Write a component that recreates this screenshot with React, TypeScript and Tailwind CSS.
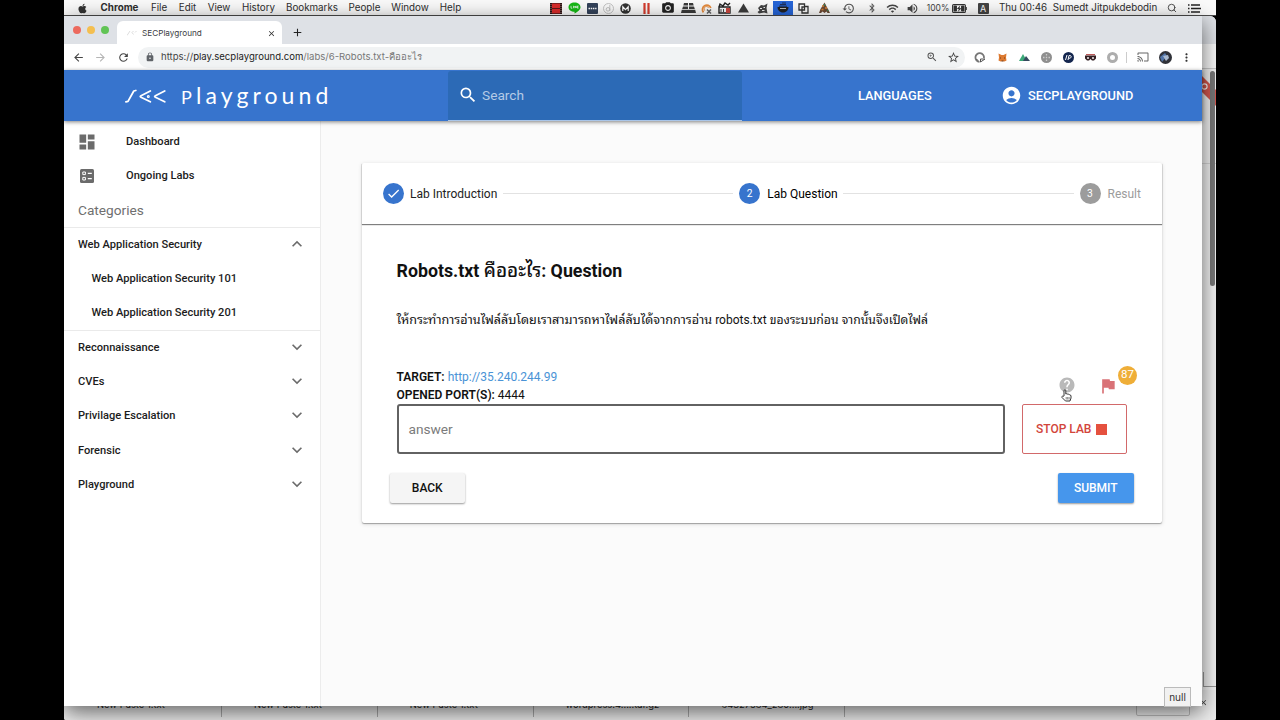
import type { ReactNode } from "react";
import { FaApple, FaBluetoothB } from "react-icons/fa";
import {
  MdArrowBack,
  MdArrowForward,
  MdRefresh,
  MdLock,
  MdZoomIn,
  MdStarBorder,
  MdCast,
  MdMoreVert,
  MdSearch,
  MdAccountCircle,
  MdDashboard,
  MdExpandMore,
  MdExpandLess,
  MdCheck,
  MdHelp,
  MdFlag,
  MdClose,
  MdAdd,
  MdHistory,
  MdWifi,
  MdVolumeUp,
  MdPhotoCamera,
} from "react-icons/md";
import { Search } from "lucide-react";

const MENUS = [
  { label: "File", width: "w-[28px]" },
  { label: "Edit", width: "w-[29px]" },
  { label: "View", width: "w-[34px]" },
  { label: "History", width: "w-[45px]" },
  { label: "Bookmarks", width: "w-[62px]" },
  { label: "People", width: "w-[43px]" },
  { label: "Window", width: "w-[48px]" },
  { label: "Help", width: "w-[33px]" },
];

const CATEGORIES = ["Reconnaissance", "CVEs", "Privilage Escalation", "Forensic", "Playground"];

const DOWNLOADS = [
  "New Paste 1.txt",
  "New Paste 1.txt",
  "New Paste 1.txt",
  "wordpress.4.....tar.gz",
  "64327584_280....jpg",
];

function Cell({ w, children }: { w: string; children: ReactNode }) {
  return <div className={"flex h-full shrink-0 items-center justify-center whitespace-nowrap " + w}>{children}</div>;
}

function StatusIcons() {
  return (
    <>
      <Cell w="w-[19px]">
        <svg width="12" height="11" viewBox="0 0 12 11">
          <rect width="12" height="11" fill="#2b1414" />
          <rect x="2" y="0.5" width="8" height="4.6" fill="#d92b2b" />
          <rect x="2" y="5.8" width="8" height="4.6" fill="#d92b2b" />
          <path d="M1 1v9M11 1v9" stroke="#b88" strokeWidth="0.8" strokeDasharray="1 1" />
        </svg>
      </Cell>
      <Cell w="w-[18px]">
        <svg width="13" height="12" viewBox="0 0 13 12">
          <path d="M6.5.5C9.800.500 12.500 2.500 12.500 5.200c0 2.400-3 4.800-6 6.300V9.800C3.200 9.800.500 7.900.500 5.200S3.200.500 6.500.500z" fill="#14b814" />
          <path d="M3 3.800v2.400h1.300M5.500 3.800v2.400M6.900 6.200V4l1.300 2V3.800M10.500 4H9.400v2.200h1.100M9.400 5.100h1" stroke="#fff" strokeWidth="0.700" fill="none" />
        </svg>
      </Cell>
      <Cell w="w-[18px]">
        <svg width="11" height="11" viewBox="0 0 11 11">
          <rect width="11" height="11" rx="1" fill="#33425a" />
          <path d="M1.5 5.5h8" stroke="#fff" strokeWidth="1.6" strokeDasharray="1.5 0.7" />
        </svg>
      </Cell>
      <Cell w="w-[15px]">
        <svg width="11" height="11" viewBox="0 0 11 11" fill="none" stroke="#b5b5b5" strokeWidth="0.8">
          <circle cx="5.5" cy="5.5" r="5" />
          <circle cx="5" cy="6.3" r="1.8" />
          <path d="M6.8 2v6" />
        </svg>
      </Cell>
      <Cell w="w-[19px]">
        <svg width="11" height="11" viewBox="0 0 11 11" fill="none">
          <circle cx="5.5" cy="5.5" r="5.3" fill="#333" />
          <path d="M2.8 8V3.8l2.7 2.8 2.7-2.8V8" stroke="#fff" strokeWidth="1.2" />
        </svg>
      </Cell>
      <Cell w="w-[23px]">
        <svg width="7" height="11" viewBox="0 0 7 11">
          <path d="M1.500 0v11M5.500 0v11" stroke="#d43c2e" strokeWidth="2.200" />
        </svg>
      </Cell>
      <Cell w="w-[20px]">
        <MdPhotoCamera size={14} color="#222" />
      </Cell>
      <Cell w="w-[20px]">
        <svg width="15" height="10" viewBox="0 0 15 10" fill="#3a3a3a">
          <path d="M3 0h4v2.6H2.3zM8 0h4l.7 2.6H8zM2 3.4h5V6H1.2zM8 3.4h5l.8 2.6H8zM.8 6.8h13.4L15 10H0z" />
        </svg>
      </Cell>
      <Cell w="w-[16px]">
        <svg width="11" height="11" viewBox="0 0 11 11" fill="none">
          <path d="M2.5 9.3A4.3 4.3 0 1 1 9.8 5" stroke="#e58a3c" strokeWidth="1.8" />
          <path d="M4 7.5a2.3 2.3 0 1 1 3.6-2.6" stroke="#e9a469" strokeWidth="1.2" />
          <path d="M6 6.500l4 4M10 6.500l-4 4" stroke="#666" strokeWidth="1.5" />
        </svg>
      </Cell>
      <Cell w="w-[20px]">
        <svg width="13" height="12" viewBox="0 0 13 12" fill="none">
          <path d="M1 5h11v6H1zM1 5l1-3 3 2 2-3 3 2 2-2" stroke="#222" strokeWidth="1.4" />
          <path d="M8 6h4v5H8z" fill="#c9473f" />
          <path d="M3 7v3M5.5 7v3" stroke="#444" />
        </svg>
      </Cell>
      <Cell w="w-[18px]">
        <svg width="11" height="10" viewBox="0 0 11 10" fill="#3c3c3c">
          <path d="M5.5 0.5 11 9.5H0z" />
        </svg>
      </Cell>
      <Cell w="w-[21px]">
        <svg width="11" height="11" viewBox="0 0 11 11">
          <path d="M10.5.5 9.5 5l1 5.5-3.5-1L2 10.5.5 9l2-1.5L1 5l3-3 3 .5z" fill="#444" />
          <path d="M3 5.500h2M6.500 4.500h1.500M5 7.500h2.500" stroke="#eee" />
        </svg>
      </Cell>
      <div className="-mt-px flex h-full w-[20px] shrink-0 items-center justify-center bg-[#2665d8]">
        <svg width="12" height="11" viewBox="0 0 12 11">
          <path d="M0.5 5h11c0 3-2.2 5.5-5.5 5.5S.5 8 .5 5z" fill="#222" />
          <path d="M2 4.2h8M3 2.6h6M5 1h4" stroke="#1d2c4e" strokeWidth="1" />
          <path d="M3 6.500h6" stroke="#bbb" strokeWidth="1" />
        </svg>
      </div>
      <Cell w="w-[21px]">
        <svg width="11" height="11" viewBox="0 0 11 11" fill="none" stroke="#333" strokeWidth="1.3">
          <path d="M1 1h5.500v3H4V7H1zM4 7v3h6V3.500H6.500V7H4" />
        </svg>
      </Cell>
      <Cell w="w-[20px]">
        <svg width="13" height="12" viewBox="0 0 13 12">
          <path d="M6.500 0.500 12 11H9.500L8.500 9.500 6.500 11 4.500 9.500 3 11H1l1.500-4z" fill="#6b4a35" />
          <path d="M4 4h2M7 6h2M3.500 7.500h2" stroke="#d98236" strokeWidth="1.5" />
          <path d="M6.500 2v2M9 8.500h1.500" stroke="#3f7b54" strokeWidth="1.4" />
        </svg>
      </Cell>
      <Cell w="w-[28px]">
        <MdHistory size={13} color="#555" />
      </Cell>
      <Cell w="w-[20px]">
        <FaBluetoothB size={10} color="#555" />
      </Cell>
      <Cell w="w-[20px]">
        <MdWifi size={13} color="#444" />
      </Cell>
      <Cell w="w-[20px]">
        <MdVolumeUp size={13} color="#444" />
      </Cell>
      <Cell w="w-[32px]">
        <span className="text-[8.5px] text-[#444]">100%</span>
      </Cell>
      <Cell w="w-[12px]">
        <svg className="shrink-0" width="16" height="9" viewBox="0 0 16 9">
          <rect x="0.600" y="0.600" width="12.800" height="7.800" rx="1" fill="none" stroke="#333" strokeWidth="1.1" />
          <path d="M2 2h2.500v5H2zM9.500 2H12v5H9.500zM14.400 3v3" fill="#333" stroke="#333" strokeWidth="0.9" />
          <path d="M8.200 1.500 4.800 5h2l-.8 2.700L9.500 4.200h-2z" fill="#333" />
        </svg>
      </Cell>
      <Cell w="w-[34px]">
        <span className="grid h-[11px] w-[11px] place-items-center rounded-[1px] bg-[#444] text-[9px] leading-none text-white">
          A
        </span>
      </Cell>
      <Cell w="w-[46px]">Thu 00:46</Cell>
      <Cell w="w-[118px]">Sumedt Jitpukdebodin</Cell>
      <Cell w="w-[16px]">
        <Search size={10} strokeWidth={2.2} color="#444" />
      </Cell>
      <Cell w="w-[28px]">
        <svg width="13" height="9" viewBox="0 0 13 9" stroke="#222" strokeWidth="1.3">
          <path d="M0 1h1.500M3 1h9M0 4.500h1.500M3 4.500h10M0 8h1.500M3 8h9" />
        </svg>
      </Cell>
    </>
  );
}

function MenuBar() {
  return (
    <div className="flex h-4 items-center border-b border-[#4a4a4a] bg-[#fafafa] pt-px pr-[8px] text-[9.8px] text-[#2e2e2e]">
      <Cell w="w-[37px]">
        <FaApple size={11} color="#333" />
      </Cell>
      <Cell w="w-[37px]">
        <span className="font-bold">Chrome</span>
      </Cell>
      <div className="w-[7px]" />
      {MENUS.map((m) => (
        <Cell key={m.label} w={m.width}>
          {m.label}
        </Cell>
      ))}
      <div className="flex-1" />
      <StatusIcons />
    </div>
  );
}

function TabStrip() {
  return (
    <div className="flex h-7 items-end bg-[#dee1e6] pl-[9px]">
      <div className="flex h-7 items-center gap-[5px]">
        <span className="h-2 w-2 rounded-full bg-[#ec6a5e]" />
        <span className="ml-px h-2 w-2 rounded-full bg-[#f4bf50]" />
        <span className="ml-px h-2 w-2 rounded-full bg-[#61c455]" />
      </div>
      <div className="ml-[8px] flex h-[23px] w-[165px] items-center rounded-t-md bg-white pt-px pr-[6px] pl-[10px]">
        <svg width="10" height="6" viewBox="0 0 10 6" fill="none" stroke="#ddd">
          <path d="M0 5.500 3 1M6.500 1 5 2.500l1.500 2M9.500 1 8 2.500" />
        </svg>
        <span className="ml-[5px] flex-1 text-[8.2px] text-[#3c4043]">SECPlayground</span>
        <MdClose size={9} color="#333" />
      </div>
      <MdAdd size={13} color="#222" className="mb-[5px] ml-[9px]" />
    </div>
  );
}

function Toolbar() {
  return (
    <div className="flex h-[26px] items-center bg-white pl-[8px]">
      <MdArrowBack size={13} color="#444" />
      <MdArrowForward size={13} color="#b5b5b5" className="ml-[9px]" />
      <MdRefresh size={13} color="#444" className="ml-[10px]" />
      <div className="ml-[8px] flex h-[21px] w-[827px] items-center rounded-full bg-[#f1f3f4] pr-[5px] pl-[7px]">
        <MdLock size={10} color="#5f6368" />
        <div className="ml-[6px] flex-1 text-[9.55px] text-[#777]">
          <span className="text-[#444]">https://</span>
          <span className="text-[#222]">play.secplayground.com</span>
          /labs/6-Robots.txt-คืออะไร
        </div>
        <MdZoomIn size={12} color="#555" />
        <MdStarBorder size={13} color="#444" className="ml-[9px]" />
      </div>
      <div className="ml-[2px] flex items-center">
        <Cell w="w-[25px]">
          <svg width="12" height="11" viewBox="0 0 12 11" fill="none" stroke="#777" strokeWidth="1.8">
            <path d="M5.500 9.800A4.300 4.300 0 1 1 10 6" />
            <path d="M6.500 10V7h4.500zM4 8.500 2.500 7" stroke="#555" strokeWidth="1" />
          </svg>
        </Cell>
        <Cell w="w-[21px]">
          <svg width="9" height="9" viewBox="0 0 9 9">
            <path d="m.5.500 3 1.500h2l3-1.500-.5 4 .5 3-2 1-2-.5-2 .5-2-1 .5-3z" fill="#dd7a31" />
            <path d="M2 5h1M6 5h1M3.500 8h2" stroke="#6e3c1c" />
          </svg>
        </Cell>
        <Cell w="w-[22px]">
          <svg width="11" height="8" viewBox="0 0 11 8">
            <path d="M0 8 4 1l4 7z" fill="#3ba878" />
            <path d="m4 8 3-5 4 5z" fill="#35495e" />
          </svg>
        </Cell>
        <Cell w="w-[22px]">
          <svg width="11" height="11" viewBox="0 0 11 11">
            <circle cx="5.500" cy="5.500" r="5.500" fill="#8f8f8f" />
            <path d="M5.500 2v1.500M5.500 7.500V9M2 5.500h1.500M7.500 5.500H9M4.800 5.500h1.400" stroke="#ccc" strokeWidth="1.3" />
          </svg>
        </Cell>
        <Cell w="w-[22px]">
          <svg width="11" height="11" viewBox="0 0 11 11" fill="none" stroke="#fff">
            <circle cx="5.500" cy="5.500" r="5.500" fill="#14264f" stroke="none" />
            <path d="m4 3-1.500 5M6 3.500 5 8M6 3.500c3-.5 3 3-.3 2.800" />
          </svg>
        </Cell>
        <Cell w="w-[22px]">
          <svg width="11" height="7" viewBox="0 0 11 7">
            <path d="M0 1.500h11v3L9 6.500H7L5.500 5 4 6.500H2L0 4.500z" fill="#332024" />
            <circle cx="3" cy="4" r="1.100" fill="#e8e0e0" />
            <circle cx="8" cy="4" r="1.100" fill="#e8e0e0" />
            <path d="M1 .7h9" stroke="#a33" />
          </svg>
        </Cell>
        <Cell w="w-[22px]">
          <span className="h-[11px] w-[11px] rounded-full border-[3px] border-[#adadad]" />
        </Cell>
        <span className="ml-[3px] h-[11px] w-px bg-[#ccc]" />
        <Cell w="w-[31px]">
          <MdCast size={12} color="#666" />
        </Cell>
        <Cell w="w-[14px]">
          <svg width="13" height="13" viewBox="0 0 13 13">
            <circle cx="6.500" cy="6.500" r="6.500" fill="#2f3138" />
            <path d="m1 6 5-4 2 3-5 6z" fill="#5174a8" />
            <path d="m4 5 5-1 1 3-3 3z" fill="#a9b9cf" />
          </svg>
        </Cell>
        <Cell w="w-[29px]">
          <MdMoreVert size={13} color="#333" />
        </Cell>
      </div>
    </div>
  );
}

function Logo() {
  return (
    <div className="flex items-center text-white">
      <svg width="42" height="16" viewBox="0 0 42 16" fill="none" stroke="currentColor" strokeWidth="1.8" strokeLinecap="round" strokeLinejoin="round">
        <path d="M.9 13.800 3 13.400 8.800 3l2-.5M25.300 3 16 7.700q-1.500.8 0 1.600l9.300 4.500M39.700 3l-9.300 4.700q-1.500.8 0 1.600l9.300 4.500" />
        <circle cx="23.300" cy="8.600" r="0.600" />
      </svg>
      <span className="ml-[14px] font-['Lato',sans-serif] text-[23px] leading-none tracking-[4.1px] whitespace-nowrap">
        <span className="text-[18px]">P</span>layground
      </span>
    </div>
  );
}

function AppBar() {
  return (
    <header className="relative z-10 flex h-[51px] items-center bg-[#3774cd] pl-[61px] text-white shadow-[0_1px_4px_rgba(0,0,0,0.5)]">
      <div className="w-[323px]">
        <Logo />
      </div>
      <div className="flex h-[50px] w-[294px] items-center rounded-t-[3px] border-b border-[#a9c5e8] bg-[#2c6ab6] pl-[10px]">
        <MdSearch size={20} />
        <span className="ml-[4px] text-[13.7px] text-[#b4cbe6]">Search</span>
      </div>
      <span className="ml-[116px] w-[143px] text-[12.8px] font-medium">LANGUAGES</span>
      <MdAccountCircle size={21} />
      <span className="ml-[6px] text-[12.8px] font-medium">SECPLAYGROUND</span>
    </header>
  );
}

function BallotIcon() {
  return (
    <svg className="mx-[3px]" width="14" height="14" viewBox="0 0 14 14">
      <rect width="14" height="14" rx="1.500" fill="#6b6b6b" />
      <path d="M2.800 3h2.600v2.600H2.800zM2.800 8.400h2.600V11H2.800z" fill="none" stroke="#fff" strokeWidth="1" />
      <path d="M7.800 4.300h4M7.800 9.700h4" stroke="#fff" strokeWidth="1.2" />
    </svg>
  );
}

function Sidebar() {
  return (
    <nav className="w-[257px] shrink-0 border-r border-[#ececec] bg-white pt-[4px] text-[11.1px] font-medium text-[#1c1c1c]">
      <div className="flex h-[34.2px] items-center pl-[13px]">
        <MdDashboard size={20} color="#6b6b6b" />
        <span className="ml-[29px]">Dashboard</span>
      </div>
      <div className="flex h-[34.2px] items-center pl-[13px]">
        <BallotIcon />
        <span className="ml-[29px]">Ongoing Labs</span>
      </div>
      <div className="flex h-[35.1px] items-center border-b border-[#eaeaea] pl-[14px] text-[13.7px] font-normal text-[#6f6f6f]">
        Categories
      </div>
      <div className="border-b border-[#eaeaea]">
        <div className="flex h-[33.5px] items-center justify-between pr-[13px] pl-[14px]">
          Web Application Security
          <MdExpandLess size={20} color="#6b6b6b" className="mb-[2px]" />
        </div>
        <div className="flex h-[34.2px] items-center pl-[27.4px]">Web Application Security 101</div>
        <div className="flex h-[34.2px] items-center pl-[27.4px]">Web Application Security 201</div>
      </div>
      {CATEGORIES.map((name) => (
        <div key={name} className="flex h-[34.2px] items-center justify-between pr-[13px] pl-[14px]">
          {name}
          <MdExpandMore size={20} color="#6b6b6b" className="mb-[3px]" />
        </div>
      ))}
    </nav>
  );
}

function StepDot({ className, children }: { className: string; children: ReactNode }) {
  return (
    <span className={"grid h-[21px] w-[21px] shrink-0 place-items-center rounded-full text-[10.3px] text-white " + className}>
      {children}
    </span>
  );
}

function Stepper() {
  return (
    <div className="flex h-[61px] items-center pr-[21px] pl-[20.5px] text-[12px] text-[#222] shadow-[0_1px_1px_rgba(0,0,0,0.5)]">
      <StepDot className="bg-[#3774cd]">
        <MdCheck size={15} />
      </StepDot>
      <span className="ml-[6.5px] w-[87px] whitespace-nowrap">Lab Introduction</span>
      <span className="mx-[6px] h-px flex-1 bg-[#e2e2e2]" />
      <StepDot className="bg-[#3774cd]">2</StepDot>
      <span className="ml-[7px] w-[70px] whitespace-nowrap text-black">Lab Question</span>
      <span className="mx-[6px] h-px flex-1 bg-[#e2e2e2]" />
      <StepDot className="bg-[#9c9c9c]">3</StepDot>
      <span className="ml-[7px] w-[33px] text-[#9c9c9c]">Result</span>
    </div>
  );
}

function HandCursor() {
  return (
    <svg className="absolute top-[13px] left-[3px]" width="11" height="13" viewBox="0 0 11 13">
      <path
        d="M3 7V1.800a.9.900 0 0 1 1.800 0V5l1-.3 1 .5 1-.1.700.7 1 .2.500 1v2L9 12H4.500L1 8.500c-.5-1 .5-1.800 1.300-1.200z"
        fill="#fff"
        stroke="#222"
        strokeWidth="0.9"
      />
      <path d="M5.200 8v2.500M6.700 8v2.500M8.100 8v2.500" stroke="#333" strokeWidth="0.6" />
    </svg>
  );
}

// Thai glyphs run small next to Roboto, so they get a slightly larger size.
function Thai({ className, children }: { className: string; children: ReactNode }) {
  return (
    <span lang="th" className={"font-['Noto_Sans_Thai_Looped','Loma','Garuda','Waree',sans-serif] leading-none " + className}>
      {children}
    </span>
  );
}

function QuestionCard() {
  return (
    <main className="mt-[42px] ml-[41px] h-[360px] w-[799.5px] shrink-0 rounded-[2px] bg-white shadow-[0_1px_1px_rgba(0,0,0,0.3),0_1px_4px_rgba(0,0,0,0.15)]">
      <Stepper />
      <div className="pt-[34px] pr-[28px] pl-[34.5px] text-[12px] text-[#111]">
        <h1 className="h-[26px] text-[17.8px] leading-[26px] font-bold">
          Robots.txt <Thai className="text-[18.8px] font-medium">คืออะไร</Thai>: Question
        </h1>
        <p className="mt-[26px] h-[20px] leading-[20px] whitespace-nowrap">
          <Thai className="text-[12.6px]">ให้กระทำการอ่านไฟล์ลับโดยเราสามารถหาไฟล์ลับได้จากการอ่าน</Thai> robots.txt{" "}
          <Thai className="text-[12.2px]">ของระบบก่อน จากนั้นจึงเปิดไฟล์</Thai>
        </p>
        <div className="mt-[38px] flex h-[36px] justify-between">
          <div className="leading-[18px]">
            <div>
              <b className="font-semibold">TARGET:</b> <span className="text-[#4a93d6]">http://35.240.244.99</span>
            </div>
            <div>
              <b className="font-semibold">OPENED PORT(S):</b> 4444
            </div>
          </div>
          <div className="flex pt-[7.5px] pr-[16px]">
            <span className="relative h-5 w-[40px]">
              <MdHelp size={18} color="#b9b9b9" />
              <HandCursor />
            </span>
            <span className="relative h-5 w-5">
              <MdFlag size={20} color="#d97277" />
              <span className="absolute -top-[10px] left-[20.5px] grid h-[19px] w-[19px] place-items-center rounded-full bg-[#efae38] text-[11.5px] text-white">
                87
              </span>
            </span>
          </div>
        </div>
        <div className="flex gap-[17px]">
          <div className="flex h-[50px] w-[608px] items-center rounded-[3px] border-2 border-[#626262] pl-[10px] text-[13.7px] text-[#7b7b7b]">
            answer
          </div>
          <button
            type="button"
            className="flex h-[50px] w-[105px] items-center rounded-[2px] border border-[#d2696a] pl-[13.5px] font-medium whitespace-nowrap text-[#d2453b]"
          >
            STOP LAB
            <span className="ml-[5px] h-[11px] w-[11px] bg-[#e5513f]" />
          </button>
        </div>
        <div className="mt-[19px] -ml-[7px] flex justify-between">
          <button
            type="button"
            className="h-[30px] w-[75.5px] rounded-[2px] bg-[#f5f5f5] font-medium shadow-[0_1px_2px_rgba(0,0,0,0.4)]"
          >
            BACK
          </button>
          <button
            type="button"
            className="h-[30px] w-[75.5px] rounded-[2px] bg-[#4696ec] font-medium text-white shadow-[0_1px_2px_rgba(0,0,0,0.4)]"
          >
            SUBMIT
          </button>
        </div>
      </div>
    </main>
  );
}

// Browser window lying behind the active one; only its right and bottom edges show.
function BackWindow() {
  return (
    <div className="absolute inset-x-0 top-4 bottom-0 overflow-hidden rounded-t-md rounded-b-[2px] bg-[#f4f4f4]">
      <div className="h-7 bg-[#dee1e6]" />
      <div className="h-[25px] border-b border-[#ccc] bg-[#fafafa]" />
      <svg className="absolute top-[60px] right-0" width="14" height="32" viewBox="0 0 14 32">
        <path d="M0 0v16l14 14V14z" fill="#d6584f" />
        <circle cx="2.500" cy="10.500" r="2.600" fill="none" stroke="#fff" strokeWidth="1.1" />
      </svg>
      <div className="absolute top-[147px] right-0 h-px w-[14px] bg-[#d8d8d8]" />
      <span className="absolute top-[55px] right-px h-[215px] w-[5px] rounded-full bg-[#777]" />
      <div className="absolute right-0 bottom-[33px] h-[15px] w-[13px] border-b border-l border-[#999]" />
      <div className="absolute inset-x-0 bottom-0 flex h-[30px] items-center bg-[#ededed] text-[9.4px] text-[#222]">
        {DOWNLOADS.map((name, i) => (
          <div key={i} className="flex h-[23px] w-[155.8px] shrink-0 items-center border-r border-[#aaa] pl-[14px] first:w-[158px] first:pl-[15px]">
            <span className="mr-[10px] h-px w-[8px] bg-[#999]" />
            {name}
          </div>
        ))}
        <span className="mt-[1px] ml-[291px] h-[20px] w-[54px] rounded-[2px] border border-[#bbb]" />
        <MdClose size={9} color="#444" className="mb-[6px] ml-[9px]" />
      </div>
    </div>
  );
}

export default function App() {
  return (
    <div className="h-[720px] w-[1280px] overflow-hidden bg-black px-16 font-['Inter',sans-serif]">
      <div className="relative h-full">
        <MenuBar />
        <BackWindow />
        <div className="absolute top-4 left-0 flex h-[690px] w-[1138px] flex-col rounded-[5px] bg-white shadow-[0_6px_22px_rgba(0,0,0,0.6)]">
          <TabStrip />
          <Toolbar />
          <div className="flex min-h-0 flex-1 flex-col font-['Roboto',sans-serif]">
            <AppBar />
            <div className="flex min-h-0 flex-1 bg-[#fbfbfb]">
              <Sidebar />
              <QuestionCard />
            </div>
          </div>
          <div className="absolute right-[11px] -bottom-px grid h-[20px] w-[27px] place-items-center border border-[#bbb] bg-[#f1f1f1] text-[10px] text-[#333]">
            null
          </div>
        </div>
      </div>
    </div>
  );
}
